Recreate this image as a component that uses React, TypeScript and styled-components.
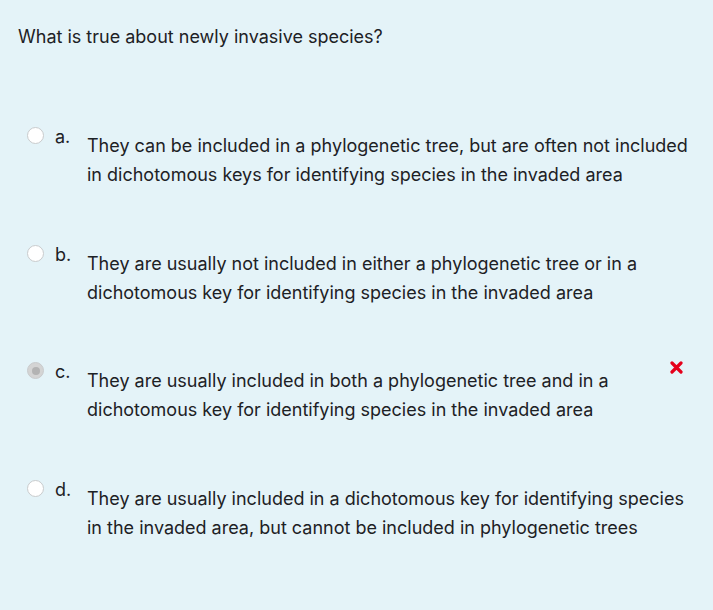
import React from 'react';
import styled, { createGlobalStyle } from 'styled-components';

const GlobalStyle = createGlobalStyle`
    html, body {
        margin: 0;
        padding: 0;
        background: #e4f3f8;
    }
    body {
        font-family: Inter, 'Liberation Sans', Arial, sans-serif;
        color: #1d2125;
    }
`;

interface AnswerData {
    letter: string;
    text: string;
    selected?: boolean;
    incorrect?: boolean;
}

const answers: AnswerData[] = [
    {
        letter: 'a.',
        text: 'They can be included in a phylogenetic tree, but are often not included in dichotomous keys for identifying species in the invaded area',
    },
    {
        letter: 'b.',
        text: 'They are usually not included in either a phylogenetic tree or in a dichotomous key for identifying species in the invaded area',
    },
    {
        letter: 'c.',
        text: 'They are usually included in both a phylogenetic tree and in a dichotomous key for identifying species in the invaded area',
        selected: true,
        incorrect: true,
    },
    {
        letter: 'd.',
        text: 'They are usually included in a dichotomous key for identifying species in the invaded area, but cannot be included in phylogenetic trees',
    },
];

const Page = styled.div`
    width: 713px;
    min-height: 610px;
    background: #e4f3f8;
    box-sizing: border-box;
    padding: 26px 0 0 18px;
`;

const QuestionText = styled.div`
    font-size: 18px;
    line-height: 22px;
    margin-bottom: 78px;
`;

const AnswerList = styled.div`
    display: flex;
    flex-direction: column;
    gap: 44px;
    padding-left: 9px;
`;

const AnswerRow = styled.div`
    display: flex;
    align-items: flex-start;
    position: relative;
    height: 73.5px;
`;

const Radio = styled.span<{ checked?: boolean }>`
    flex: none;
    width: 17px;
    height: 17px;
    margin-top: 1px;
    border-radius: 50%;
    box-sizing: border-box;
    border: 1px solid #c9cbcd;
    background: ${(p) => (p.checked ? '#d4d4d4' : '#ffffff')};
    display: flex;
    align-items: center;
    justify-content: center;
    &::after {
        content: '';
        display: ${(p) => (p.checked ? 'block' : 'none')};
        width: 8px;
        height: 8px;
        border-radius: 50%;
        background: #b3b3b3;
    }
`;

const Letter = styled.span`
    flex: none;
    width: 32px;
    margin-left: 11px;
    margin-top: 1px;
    font-size: 18px;
    line-height: 20px;
`;

const AnswerText = styled.div`
    flex: none;
    width: 612px;
    margin-top: 5px;
    font-size: 18px;
    line-height: 29px;
`;

const Cross = styled.svg`
    position: absolute;
    left: 643px;
    top: 0;
`;

export default function App() {
    return (
        <>
            <GlobalStyle />
            <Page>
                <QuestionText>What is true about newly invasive species?</QuestionText>
                <AnswerList>
                    {answers.map((answer) => (
                        <AnswerRow key={answer.letter}>
                            <Radio checked={answer.selected} />
                            <Letter>{answer.letter}</Letter>
                            <AnswerText>{answer.text}</AnswerText>
                            {answer.incorrect && (
                                <Cross width="13" height="13" viewBox="0 0 13 13">
                                    <path d="M2 2 L11 11 M11 2 L2 11" stroke="#e5001b" strokeWidth="3.2" strokeLinecap="round" />
                                </Cross>
                            )}
                        </AnswerRow>
                    ))}
                </AnswerList>
            </Page>
        </>
    );
}
